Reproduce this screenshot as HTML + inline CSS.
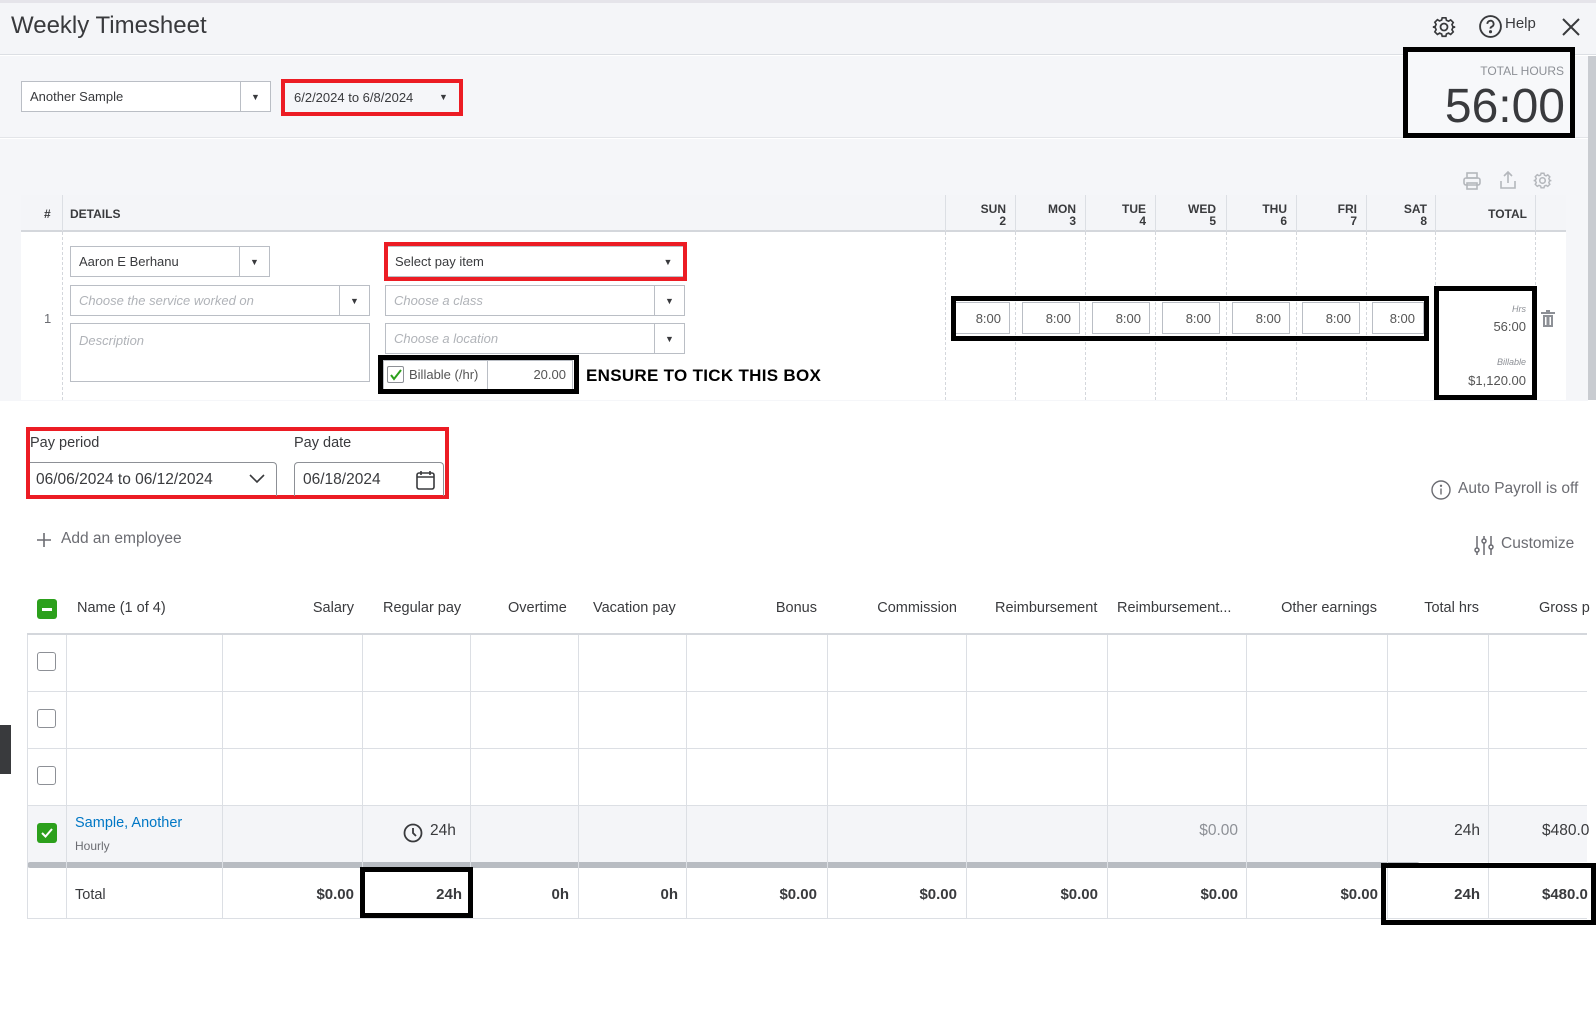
<!DOCTYPE html>
<html><head><meta charset="utf-8"><style>
*{box-sizing:border-box;margin:0;padding:0}
body{width:1596px;height:1034px;position:relative;overflow:hidden;background:#fff;font-family:"Liberation Sans",sans-serif;color:#393a3d}
.a{position:absolute}
.sel{position:absolute;background:#fff;border:1px solid #babec5;font-size:13px;color:#393a3d;padding:0 8px;display:flex;align-items:center}
.sel .dd{position:absolute;right:0;top:0;bottom:0;width:30px;border-left:1px solid #babec5;display:flex;align-items:center;justify-content:center;font-size:9px}
.ph{color:#b0b3b8;font-style:italic}
.red{position:absolute;border:4px solid #ec1c24}
.blk{position:absolute;border:5px solid #000}
.vl{position:absolute;width:0;border-left:1px dashed #d4d7dc}
.day{position:absolute;top:302px;height:32px;width:58px;border:1px solid #babec5;background:#fff;font-size:13px;text-align:right;padding:8px 8px 0 0;color:#555}
.hd{position:absolute;font-size:12px;font-weight:bold;text-align:right;line-height:12px;color:#393a3d}
.th{position:absolute;top:600px;font-size:14.5px;color:#393a3d}
.cl{position:absolute;width:1px;background:#dcdfe4}
.hl{position:absolute;height:1px;background:#dcdfe4;left:27px;width:1560px}
.cb{position:absolute;left:37px;width:19px;height:19px;border:1px solid #8d9096;border-radius:3px;background:#fff}
.tv{position:absolute;top:886px;font-size:15px;font-weight:bold;color:#393a3d;text-align:right}
</style></head><body>
<div class="a" style="left:0;top:0;width:1596px;height:3px;background:#e5e4ea"></div>
<div class="a" style="left:0;top:3px;width:1596px;height:52px;background:#f4f5f8;border-bottom:1px solid #dcdfe4"></div>
<div class="a" style="left:11px;top:12px;font-size:24px;color:#393a3d">Weekly Timesheet</div>
<svg class="a" style="left:1432px;top:15px" width="24" height="24" viewBox="0 0 24 24" fill="none" stroke="#393a3d" stroke-width="1.8"><circle cx="12" cy="12" r="3.5"/><path d="M10 2h4l.6 2.6 2.3 1 2.3-1.4 2.8 2.8-1.4 2.3 1 2.3L24 12v0l-2.4.6-1 2.3 1.4 2.3-2.8 2.8-2.3-1.4-2.3 1L14 22h-4l-.6-2.4-2.3-1-2.3 1.4-2.8-2.8 1.4-2.3-1-2.3L0 12l2.4-.6 1-2.3L2 6.8 4.8 4l2.3 1.4 2.3-1z" transform="translate(1 1) scale(.92)"/></svg>
<svg class="a" style="left:1478px;top:14px" width="25" height="25" viewBox="0 0 24 24" fill="none" stroke="#393a3d" stroke-width="1.8"><circle cx="12" cy="12" r="10"/><path d="M9 9.5a3 3 0 1 1 4 2.8c-.8.4-1 1-1 1.7"/><circle cx="12" cy="17" r=".6" fill="#393a3d"/></svg>
<div class="a" style="left:1505px;top:15px;font-size:15px;color:#393a3d">Help</div>
<svg class="a" style="left:1561px;top:17px" width="20" height="20" viewBox="0 0 20 20" stroke="#393a3d" stroke-width="2"><path d="M2 2L18 18M18 2L2 18"/></svg>
<div class="a" style="left:0;top:56px;width:1588px;height:82px;background:#f5f6f9;border-bottom:1px solid #e3e5e9"></div>
<div class="sel" style="left:21px;top:81px;width:250px;height:31px">Another Sample<div class="dd">▼</div></div>
<div class="red" style="left:281px;top:79px;width:182px;height:37px"></div>
<div class="a" style="left:294px;top:90px;font-size:13px">6/2/2024 to 6/8/2024</div>
<div class="a" style="left:439px;top:92px;font-size:9px">▼</div>
<div class="blk" style="left:1403px;top:47px;width:172px;height:91px;background:#f7f8fa"></div>
<div class="a" style="left:1400px;top:64px;width:164px;text-align:right;font-size:12px;color:#8d9096">TOTAL HOURS</div>
<div class="a" style="left:1400px;top:79px;width:165px;text-align:right;font-size:48px;color:#393a3d">56:00</div>
<div class="a" style="left:0;top:139px;width:1588px;height:262px;background:#f5f6f9"></div>
<div class="a" style="left:1588px;top:56px;width:8px;height:344px;background:#c9ccd1"></div>
<svg class="a" style="left:1462px;top:171px" width="20" height="20" viewBox="0 0 20 20" fill="none" stroke="#b4b7bc" stroke-width="1.6"><rect x="5" y="2" width="10" height="5"/><rect x="2" y="7" width="16" height="7" rx="2"/><rect x="5" y="12" width="10" height="6"/></svg>
<svg class="a" style="left:1498px;top:170px" width="20" height="20" viewBox="0 0 20 20" fill="none" stroke="#b4b7bc" stroke-width="1.6"><path d="M10 2v11M6 6l4-4 4 4M3 11v7h14v-7"/></svg>
<svg class="a" style="left:1533px;top:171px" width="19" height="19" viewBox="0 0 24 24" fill="none" stroke="#b4b7bc" stroke-width="2"><circle cx="12" cy="12" r="3.5"/><path d="M10 2h4l.6 2.6 2.3 1 2.3-1.4 2.8 2.8-1.4 2.3 1 2.3L24 12l-2.4.6-1 2.3 1.4 2.3-2.8 2.8-2.3-1.4-2.3 1L14 22h-4l-.6-2.4-2.3-1-2.3 1.4-2.8-2.8 1.4-2.3-1-2.3L0 12l2.4-.6 1-2.3L2 6.8 4.8 4l2.3 1.4 2.3-1z" transform="translate(1 1) scale(.92)"/></svg>
<div class="a" style="left:21px;top:195px;width:1545px;height:35px;background:#f4f5f8"></div>
<div class="a" style="left:21px;top:230px;width:1545px;height:2px;background:#d4d7dc"></div>
<div class="a" style="left:21px;top:232px;width:1545px;height:168px;background:#fff"></div>
<div class="a" style="left:62px;top:195px;width:1px;height:36px;background:#dcdfe4"></div>
<div class="vl" style="left:62px;top:232px;height:168px"></div>
<div class="a" style="left:44px;top:207px;font-size:12px;font-weight:bold">#</div>
<div class="a" style="left:70px;top:207px;font-size:12px;font-weight:bold">DETAILS</div>
<div class="a" style="left:945px;top:195px;width:1px;height:36px;background:#dcdfe4"></div>
<div class="a" style="left:1015px;top:195px;width:1px;height:36px;background:#dcdfe4"></div>
<div class="a" style="left:1085px;top:195px;width:1px;height:36px;background:#dcdfe4"></div>
<div class="a" style="left:1155px;top:195px;width:1px;height:36px;background:#dcdfe4"></div>
<div class="a" style="left:1226px;top:195px;width:1px;height:36px;background:#dcdfe4"></div>
<div class="a" style="left:1296px;top:195px;width:1px;height:36px;background:#dcdfe4"></div>
<div class="a" style="left:1366px;top:195px;width:1px;height:36px;background:#dcdfe4"></div>
<div class="a" style="left:1435px;top:195px;width:1px;height:36px;background:#dcdfe4"></div>
<div class="a" style="left:1535px;top:195px;width:1px;height:36px;background:#dcdfe4"></div>
<div class="vl" style="left:945px;top:232px;height:168px"></div>
<div class="vl" style="left:1015px;top:232px;height:168px"></div>
<div class="vl" style="left:1085px;top:232px;height:168px"></div>
<div class="vl" style="left:1155px;top:232px;height:168px"></div>
<div class="vl" style="left:1226px;top:232px;height:168px"></div>
<div class="vl" style="left:1296px;top:232px;height:168px"></div>
<div class="vl" style="left:1366px;top:232px;height:168px"></div>
<div class="vl" style="left:1435px;top:232px;height:168px"></div>
<div class="vl" style="left:1535px;top:232px;height:168px"></div>
<div class="hd" style="left:950px;top:203px;width:56px">SUN<br>2</div>
<div class="hd" style="left:1020px;top:203px;width:56px">MON<br>3</div>
<div class="hd" style="left:1090px;top:203px;width:56px">TUE<br>4</div>
<div class="hd" style="left:1160px;top:203px;width:56px">WED<br>5</div>
<div class="hd" style="left:1231px;top:203px;width:56px">THU<br>6</div>
<div class="hd" style="left:1301px;top:203px;width:56px">FRI<br>7</div>
<div class="hd" style="left:1371px;top:203px;width:56px">SAT<br>8</div>
<div class="hd" style="left:1440px;top:208px;width:87px">TOTAL</div>
<div class="a" style="left:44px;top:311px;font-size:13px;color:#6b6c72">1</div>
<div class="sel" style="left:70px;top:246px;width:200px;height:31px">Aaron E Berhanu<div class="dd">▼</div></div>
<div class="sel" style="left:386px;top:246px;width:298px;height:31px">Select pay item<div class="dd" style="border:none">▼</div></div>
<div class="red" style="left:384px;top:242px;width:303px;height:39px"></div>
<div class="sel" style="left:70px;top:285px;width:300px;height:31px"><span class="ph">Choose the service worked on</span><div class="dd">▼</div></div>
<div class="sel" style="left:385px;top:285px;width:300px;height:31px"><span class="ph">Choose a class</span><div class="dd">▼</div></div>
<div class="sel" style="left:70px;top:323px;width:300px;height:59px;align-items:flex-start;padding-top:9px"><span class="ph">Description</span></div>
<div class="sel" style="left:385px;top:323px;width:300px;height:31px"><span class="ph">Choose a location</span><div class="dd">▼</div></div>
<div class="sel" style="left:383px;top:360px;width:190px;height:30px;padding:0"></div>
<div class="a" style="left:387px;top:366px;width:17px;height:17px;border:1px solid #8d9096;border-radius:2px;background:#fff"></div>
<svg class="a" style="left:389px;top:368px" width="14" height="14" viewBox="0 0 14 14" fill="none" stroke="#2ca01c" stroke-width="2"><path d="M2 7l3 4 7-9"/></svg>
<div class="a" style="left:409px;top:367px;font-size:13px;color:#555">Billable (/hr)</div>
<div class="a" style="left:487px;top:360px;width:1px;height:30px;background:#babec5"></div>
<div class="a" style="left:490px;top:367px;width:76px;text-align:right;font-size:13px;color:#555">20.00</div>
<div class="blk" style="left:378px;top:355px;width:201px;height:39px"></div>
<div class="a" style="left:586px;top:366px;font-size:17px;font-weight:bold;color:#000;letter-spacing:.3px">ENSURE TO TICK THIS BOX</div>
<div class="day" style="left:952px">8:00</div>
<div class="day" style="left:1022px">8:00</div>
<div class="day" style="left:1092px">8:00</div>
<div class="day" style="left:1162px">8:00</div>
<div class="day" style="left:1232px">8:00</div>
<div class="day" style="left:1302px">8:00</div>
<div class="day" style="left:1372px;width:52px">8:00</div>
<div class="blk" style="left:951px;top:296px;width:478px;height:45px"></div>
<div class="blk" style="left:1434px;top:286px;width:103px;height:114px"></div>
<div class="a" style="left:1440px;top:304px;width:86px;text-align:right;font-size:9px;font-style:italic;color:#8d9096">Hrs</div>
<div class="a" style="left:1440px;top:319px;width:86px;text-align:right;font-size:13px;color:#555">56:00</div>
<div class="a" style="left:1440px;top:357px;width:86px;text-align:right;font-size:9px;font-style:italic;color:#8d9096">Billable</div>
<div class="a" style="left:1440px;top:373px;width:86px;text-align:right;font-size:13px;color:#555">$1,120.00</div>
<svg class="a" style="left:1541px;top:310px" width="14" height="17" viewBox="0 0 14 17" fill="#8d9096"><rect x="0" y="2" width="14" height="2"/><rect x="5" y="0" width="4" height="2"/><path d="M2 5h10v12H2z M4 7v8h1.5V7z M8.5 7v8H10V7z" fill-rule="evenodd"/></svg>
<div class="a" style="left:0;top:725px;width:11px;height:49px;background:#393a3d"></div>
<div class="red" style="left:26px;top:427px;width:423px;height:72px"></div>
<div class="a" style="left:30px;top:435px;font-size:14.5px;color:#393a3d">Pay period</div>
<div class="a" style="left:294px;top:435px;font-size:14.5px;color:#393a3d">Pay date</div>
<div class="a" style="left:30px;top:462px;width:247px;height:34px;border:1px solid #8d9096;border-bottom:none;border-left:none;border-radius:0 4px 0 0"></div>
<div class="a" style="left:36px;top:471px;font-size:15.5px">06/06/2024 to 06/12/2024</div>
<svg class="a" style="left:249px;top:474px" width="16" height="10" viewBox="0 0 16 10" fill="none" stroke="#393a3d" stroke-width="1.6"><path d="M1 1l7 7 7-7"/></svg>
<div class="a" style="left:294px;top:462px;width:150px;height:34px;border:1px solid #8d9096;border-bottom:none;border-radius:4px 4px 0 0"></div>
<div class="a" style="left:303px;top:471px;font-size:15.5px">06/18/2024</div>
<svg class="a" style="left:416px;top:470px" width="19" height="20" viewBox="0 0 19 20" fill="none" stroke="#393a3d" stroke-width="1.6"><rect x="1" y="3" width="17" height="16" rx="2"/><path d="M1 7h17M5 1v4M14 1v4"/></svg>
<svg class="a" style="left:1431px;top:480px" width="20" height="20" viewBox="0 0 20 20" fill="none" stroke="#6b6c72" stroke-width="1.4"><circle cx="10" cy="10" r="9"/><path d="M10 8.5v6"/><circle cx="10" cy="5.8" r=".5" fill="#6b6c72"/></svg>
<div class="a" style="left:1458px;top:480px;font-size:15.5px;color:#6b6c72">Auto Payroll is off</div>
<svg class="a" style="left:36px;top:532px" width="16" height="16" viewBox="0 0 16 16" stroke="#6b6c72" stroke-width="1.6"><path d="M8 1v14M1 8h14"/></svg>
<div class="a" style="left:61px;top:530px;font-size:15.5px;color:#6b6c72">Add an employee</div>
<svg class="a" style="left:1474px;top:535px" width="20" height="21" viewBox="0 0 20 21" fill="none" stroke="#6b6c72" stroke-width="1.5"><path d="M3 1v19M10 1v19M17 1v19"/><circle cx="3" cy="15" r="2" fill="#fff"/><circle cx="10" cy="6" r="2" fill="#fff"/><circle cx="17" cy="12" r="2" fill="#fff"/></svg>
<div class="a" style="left:1501px;top:535px;font-size:15.5px;color:#6b6c72">Customize</div>
<div class="a" style="left:37px;top:599px;width:20px;height:20px;border-radius:3px;background:#2ca01c"></div>
<div class="a" style="left:42px;top:608px;width:10px;height:2.5px;background:#fff"></div>
<div class="th" style="left:77px">Name (1 of 4)</div>
<div class="th" style="left:250px;width:104px;text-align:right">Salary</div>
<div class="th" style="left:383px">Regular pay</div>
<div class="th" style="left:508px">Overtime</div>
<div class="th" style="left:593px">Vacation pay</div>
<div class="th" style="left:720px;width:97px;text-align:right">Bonus</div>
<div class="th" style="left:840px;width:117px;text-align:right">Commission</div>
<div class="th" style="left:995px">Reimbursement</div>
<div class="th" style="left:1117px">Reimbursement...</div>
<div class="th" style="left:1250px;width:127px;text-align:right">Other earnings</div>
<div class="th" style="left:1400px;width:79px;text-align:right">Total hrs</div>
<div class="th" style="left:1539px;white-space:nowrap">Gross p</div>
<div class="a" style="left:27px;top:633px;width:1560px;height:2px;background:#d4d7dc"></div>
<div class="a" style="left:27px;top:805px;width:1560px;height:57px;background:#f4f5f8"></div>
<div class="hl" style="top:691px"></div>
<div class="hl" style="top:748px"></div>
<div class="hl" style="top:805px"></div>
<div class="hl" style="top:918px"></div>
<div class="a" style="left:27px;top:862px;width:1393px;height:6px;background:#b8bcc2;border-radius:3px"></div>
<div class="cl" style="left:27px;top:635px;height:284px"></div>
<div class="cl" style="left:66px;top:635px;height:284px"></div>
<div class="cl" style="left:222px;top:635px;height:284px"></div>
<div class="cl" style="left:362px;top:635px;height:284px"></div>
<div class="cl" style="left:470px;top:635px;height:284px"></div>
<div class="cl" style="left:578px;top:635px;height:284px"></div>
<div class="cl" style="left:686px;top:635px;height:284px"></div>
<div class="cl" style="left:827px;top:635px;height:284px"></div>
<div class="cl" style="left:966px;top:635px;height:284px"></div>
<div class="cl" style="left:1107px;top:635px;height:284px"></div>
<div class="cl" style="left:1246px;top:635px;height:284px"></div>
<div class="cl" style="left:1387px;top:635px;height:284px"></div>
<div class="cl" style="left:1488px;top:635px;height:284px"></div>
<div class="cb" style="top:652px"></div>
<div class="cb" style="top:709px"></div>
<div class="cb" style="top:766px"></div>
<div class="a" style="left:37px;top:823px;width:20px;height:20px;border-radius:3px;background:#2ca01c"></div>
<svg class="a" style="left:40px;top:826px" width="14" height="14" viewBox="0 0 14 14" fill="none" stroke="#fff" stroke-width="2"><path d="M2 7l3.5 3.5L12 3"/></svg>
<div class="a" style="left:75px;top:815px;font-size:14.5px;color:#0077c5">Sample, Another</div>
<div class="a" style="left:75px;top:839px;font-size:12px;color:#6b6c72">Hourly</div>
<svg class="a" style="left:403px;top:823px" width="20" height="20" viewBox="0 0 20 20" fill="none" stroke="#393a3d" stroke-width="1.8"><circle cx="10" cy="10" r="8.5"/><path d="M10 5v5l3 3"/></svg>
<div class="a" style="left:430px;top:822px;font-size:15.5px">24h</div>
<div class="a" style="left:1150px;top:822px;width:88px;text-align:right;font-size:15.5px;color:#8d9096">$0.00</div>
<div class="a" style="left:1400px;top:822px;width:80px;text-align:right;font-size:15.5px">24h</div>
<div class="a" style="left:1542px;top:822px;font-size:15.5px;white-space:nowrap">$480.0</div>
<div class="a" style="left:75px;top:887px;font-size:14.5px">Total</div>
<div class="tv" style="left:250px;width:104px">$0.00</div>
<div class="tv" style="left:380px;width:82px">24h</div>
<div class="tv" style="left:480px;width:89px">0h</div>
<div class="tv" style="left:590px;width:88px">0h</div>
<div class="tv" style="left:720px;width:97px">$0.00</div>
<div class="tv" style="left:840px;width:117px">$0.00</div>
<div class="tv" style="left:990px;width:108px">$0.00</div>
<div class="tv" style="left:1120px;width:118px">$0.00</div>
<div class="tv" style="left:1260px;width:118px">$0.00</div>
<div class="tv" style="left:1400px;width:80px">24h</div>
<div class="tv" style="left:1542px;white-space:nowrap">$480.0</div>
<div class="blk" style="left:360px;top:867px;width:113px;height:51px"></div>
<div class="blk" style="left:1381px;top:863px;width:215px;height:62px"></div>
</body></html>
